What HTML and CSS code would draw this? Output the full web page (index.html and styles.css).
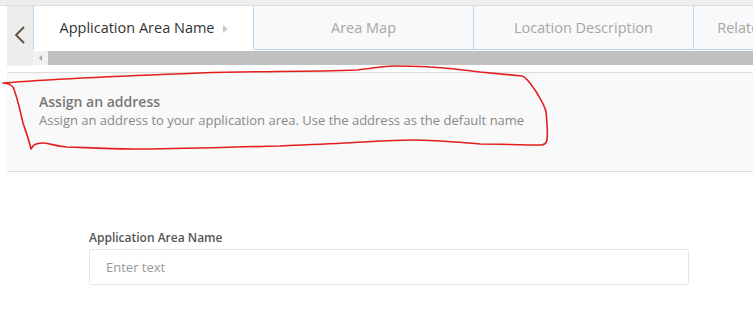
FILE: index.html
```html
<!DOCTYPE html>
<html lang="en">
<head>
    <meta charset="UTF-8">
    <meta name="viewport" content="width=device-width, initial-scale=1.0">
    <title>Application Area</title>
    <link rel="stylesheet" href="styles.css">
</head>
<body>

    <div class="top-strip"></div>

    <div class="wizard">
        <div class="nav-left">
            <svg width="12" height="20" viewBox="0 0 12 20"><path d="M10 2 L2 10 L10 18" fill="none" stroke="#5e4e3c" stroke-width="1.8"/></svg>
        </div>
        <div class="tabs-wrap">
            <div class="tabs">
                <div class="tab active">Application Area Name <span class="tab-arrow"></span></div>
                <div class="tab">Area Map</div>
                <div class="tab">Location Description</div>
                <div class="tab">Related Application Areas</div>
            </div>
            <div class="scrollbar">
                <div class="scroll-btn"><span class="scroll-arrow"></span></div>
                <div class="scroll-thumb"></div>
            </div>
        </div>
    </div>

    <div class="info-panel">
        <div class="info-title">Assign an address</div>
        <div class="info-text">Assign an address to your application area. Use the address as the default name</div>
    </div>

    <div class="form">
        <label for="areaName">Application Area Name</label>
        <input type="text" id="areaName" placeholder="Enter text">
    </div>

    <!-- red hand-drawn annotation -->
    <svg class="scribble" width="753" height="327" viewBox="0 0 753 327">
        <path d="M3 83 C40 80 120 76 200 73 C260 71 300 72 357 70 C375 68 385 66 393 66 C410 66 420 66 430 67 C450 68 465 70 480 72 C500 74 512 75 522 76 C528 78 532 86 537 93 C541 100 545 106 546 112 C547 122 548 132 547 140 C546 144 544 145 541 145 C520 145 500 144 480 144 C455 142 435 140 413 140 C395 140 380 141 363 142 C330 144 300 145 280 146 C230 147 180 149 133 149 C100 149 80 147 67 147 C55 146 48 143 43 143 C38 143 35 144 33 146 L31 149 C29 140 26 132 23 123 C20 110 17 96 13 87 C10 84 6 83 3 83 Z" fill="none" stroke="#e41e1e" stroke-width="1.6" stroke-linejoin="round"/>
    </svg>

</body>
</html>
```

FILE: styles.css
```css
body {
    margin: 0;
    font-family: "Open Sans", Arial, sans-serif;
    background: #fff;
    width: 753px;
    height: 327px;
    overflow: hidden;
    position: relative;
}

.top-strip {
    height: 5px;
    background-color: #eeeeee;
    border-bottom: 1px solid #dedede;
}

.wizard {
    display: flex;
    margin-left: 7px;
}

.nav-left {
    width: 26px;
    height: 60px;
    background-color: #ececec;
    display: flex;
    justify-content: center;
    padding-top: 19px;
    box-sizing: border-box;
}

.tabs-wrap {
    flex: 1;
    min-width: 0;
    overflow: hidden;
}

.tabs {
    display: flex;
    height: 44px;
    border-left: 1px solid #bcd6f0;
}

.tab {
    flex: 0 0 219px;
    display: flex;
    align-items: center;
    justify-content: center;
    background-color: #f7f9fb;
    border-right: 1px solid #bcd6f0;
    border-bottom: 1px solid #bcd6f0;
    color: #aaa69f;
    font-size: 14.5px;
    white-space: nowrap;
}

.tab.active {
    background-color: #fff;
    color: #333;
    border-bottom-color: #fff;
    gap: 8px;
}

.tab-arrow {
    width: 0;
    height: 0;
    border-top: 4px solid transparent;
    border-bottom: 4px solid transparent;
    border-left: 5px solid #cccccc;
    margin-top: 2px;
}

.scrollbar {
    display: flex;
    height: 14px;
    margin-top: 1px;
}

.scroll-btn {
    width: 15px;
    background-color: #f1f1f1;
    display: flex;
    align-items: center;
    justify-content: center;
}

.scroll-arrow {
    width: 0;
    height: 0;
    border-top: 3px solid transparent;
    border-bottom: 3px solid transparent;
    border-right: 3px solid #a3a3a3;
}

.scroll-thumb {
    flex: 1;
    background-color: #c1c1c1;
}

.info-panel {
    margin: 6px 0 0 7px;
    height: 100px;
    padding: 19px 32px 0;
    box-sizing: border-box;
    background-color: #f9f9f9;
    border-top: 1px solid #dddddd;
    border-bottom: 1px solid #dddddd;
}

.info-title {
    font-size: 14px;
    font-weight: 600;
    color: #777;
    line-height: 19px;
}

.info-text {
    font-size: 13px;
    color: #888;
    line-height: 18px;
}

.form {
    margin: 58px 0 0 89px;
    display: flex;
    flex-direction: column;
}

.form label {
    font-size: 12px;
    font-weight: 600;
    color: #555;
    line-height: 15px;
    margin-bottom: 4px;
}

.form input {
    width: 600px;
    height: 36px;
    box-sizing: border-box;
    border: 1px solid #e6e6e6;
    border-radius: 2px;
    padding: 0 16px;
    font-family: "Open Sans", Arial, sans-serif;
    font-size: 13px;
    color: #333;
    outline: none;
}

.form input::placeholder {
    color: #999;
}

.scribble {
    position: absolute;
    left: 0;
    top: 0;
    pointer-events: none;
}
```
